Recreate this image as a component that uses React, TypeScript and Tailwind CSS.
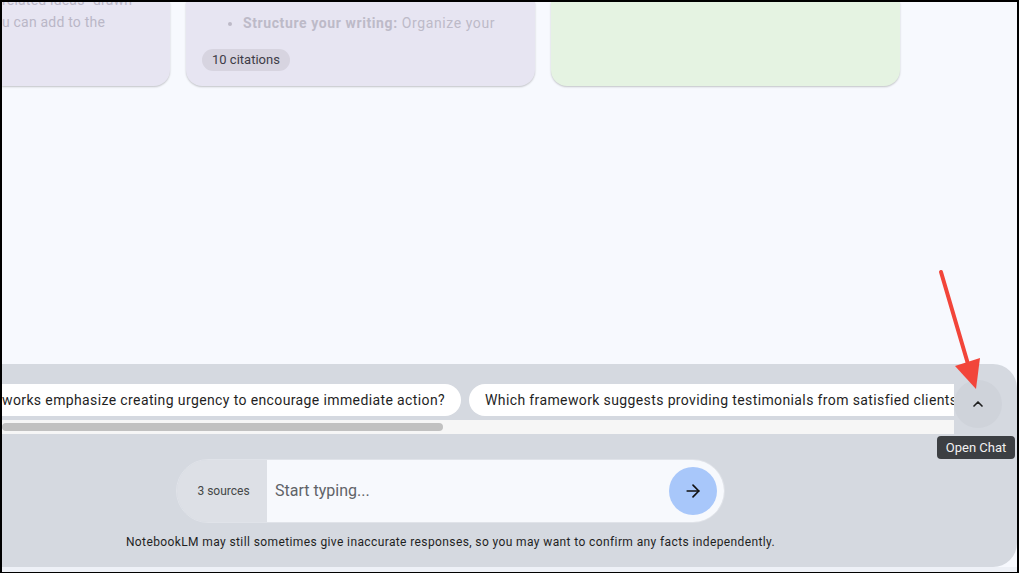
import React from 'react';
import { ArrowRight, ChevronUp } from 'lucide-react';

const suggestions = [
    'works emphasize creating urgency to encourage immediate action?',
    'Which framework suggests providing testimonials from satisfied clients?',
    'What are the key elements of a persuasive call to action?',
];

function NoteCards() {
    return (
        <div className="flex gap-4 h-[84px] shrink-0">
            {/* first card is cut by the left edge of the window */}
            <div className="w-[168px] shrink-0 bg-[#e7e5f2] rounded-br-2xl shadow-[0_1px_2px_rgba(0,0,0,0.22)] overflow-hidden text-sm leading-[22px] text-[#bab7c7]">
                <div className="-mt-[13px] whitespace-nowrap tracking-[0.2px]">
                    <p>related ideas" drawn</p>
                    <p>u can add to the</p>
                </div>
            </div>
            <div className="w-[349px] shrink-0 bg-[#e7e5f2] rounded-b-2xl shadow-[0_1px_2px_rgba(0,0,0,0.22)] overflow-hidden px-4 pt-[11px] text-sm leading-5">
                <ul className="list-disc pl-[41px] text-[#bdbac8] whitespace-nowrap tracking-[0.6px]">
                    <li>
                        <span className="font-bold">Structure your writing:</span> Organize your
                    </li>
                </ul>
                <span className="inline-flex items-center h-[22px] mt-[16px] px-[10px] rounded-full bg-[#d7d4e0] text-[13px] text-[#3e3c47]">
                    10 citations
                </span>
            </div>
            <div className="w-[349px] shrink-0 bg-[#e5f3e2] rounded-b-2xl shadow-[0_1px_2px_rgba(0,0,0,0.22)]" />
        </div>
    );
}

function ChatPanel() {
    return (
        <div className="relative mt-auto h-[203px] bg-[#d5d9e0] rounded-r-[24px] pt-5">
            <div className="flex items-start pr-[15px]">
                <div className="flex-1 min-w-0 overflow-hidden">
                    <div className="flex gap-2 h-8">
                        {suggestions.map((s) => (
                            <span
                                key={s}
                                className="shrink-0 flex items-center h-8 px-4 first:pl-0 first:rounded-l-none rounded-full bg-white text-sm tracking-[0.38px] text-[#1f1f1f] whitespace-nowrap"
                            >
                                {s}
                            </span>
                        ))}
                    </div>
                    <div className="mt-1 h-[14px] bg-[#f6f6f6] flex items-center">
                        <div className="h-2 w-[441px] rounded-full bg-[#c1c1c1]" />
                    </div>
                </div>
                <button className="w-12 h-12 -mt-1 shrink-0 rounded-full bg-[#cfd3da] flex items-center justify-center text-[#1f1f1f]">
                    <ChevronUp className="w-4 h-4" strokeWidth={2.5} />
                </button>
            </div>

            <div className="w-[897px] flex flex-col items-center mt-[25px]">
                <div className="w-[549px] h-16 flex rounded-full overflow-hidden border border-[#e0e3e9]">
                    <div className="w-[90px] shrink-0 bg-[#dde0e6] flex items-center justify-center pl-[3px] text-xs text-[#444746]">
                        3 sources
                    </div>
                    <div className="flex-1 bg-[#f7f9fd] flex items-center pl-2 pr-[7px]">
                        <span className="flex-1 text-base text-[#5f6368]">Start typing...</span>
                        <button className="w-12 h-12 rounded-full bg-[#a8c7fa] flex items-center justify-center text-[#111]">
                            <ArrowRight className="w-5 h-5" strokeWidth={2} />
                        </button>
                    </div>
                </div>
                <p className="mt-[11px] text-xs leading-4 tracking-[0.39px] text-[#1f1f1f] whitespace-nowrap">
                    NotebookLM may still sometimes give inaccurate responses, so you may want to confirm any facts independently.
                </p>
            </div>

            <div className="absolute left-[935px] top-[72px] h-[23px] w-[78px] rounded bg-[#3c3f43] text-[13px] text-[#f1f1f1] flex items-center justify-center">
                Open Chat
            </div>
        </div>
    );
}

export default function App() {
    return (
        <div className="w-[1019px] h-[573px] bg-black pt-[2px] pl-[2px] pr-[2px] pb-[1px] font-['Roboto',sans-serif]">
            <div className="relative w-full h-full bg-[#f7f9fe] flex flex-col overflow-hidden">
                <NoteCards />
                <ChatPanel />
                <div className="h-[5px] shrink-0 bg-[#eef1f7]" />

                {/* annotation arrow */}
                <svg className="absolute left-0 top-0 pointer-events-none" width="1015" height="570" viewBox="2 2 1015 570">
                    <line x1="941" y1="272" x2="968" y2="364" stroke="#f2453a" strokeWidth="4" strokeLinecap="round" />
                    <polygon points="955,366 980,358 976,389" fill="#f2453a" />
                </svg>
            </div>
        </div>
    );
}
